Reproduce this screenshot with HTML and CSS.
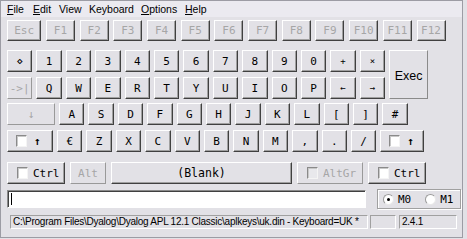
FILE: index.html
```html
<!DOCTYPE html>
<html>
<head>
<meta charset="utf-8">
<link rel="stylesheet" href="styles.css">
</head>
<body>
<div class="win">
  <div class="menubar">
    <span class="mi w-file"><u>F</u>ile</span>
    <span class="mi w-edit"><u>E</u>dit</span>
    <span class="mi w-view">View</span>
    <span class="mi w-kb">Keyboard</span>
    <span class="mi w-opt"><u>O</u>ptions</span>
    <span class="mi"><u>H</u>elp</span>
  </div>
  <div class="frow">
    <div class="key fk esc dim">Esc</div>
    <div class="key fk dim">F1</div>
    <div class="key fk dim">F2</div>
    <div class="key fk dim">F3</div>
    <div class="key fk dim">F4</div>
    <div class="key fk dim">F5</div>
    <div class="key fk dim">F6</div>
    <div class="key fk dim">F7</div>
    <div class="key fk dim">F8</div>
    <div class="key fk dim">F9</div>
    <div class="key fk dim">F10</div>
    <div class="key fk dim">F11</div>
    <div class="key fk dim">F12</div>
  </div>
  <div class="block12">
    <div class="rows">
      <div class="row">
        <div class="key">⋄</div>
        <div class="key">1</div>
        <div class="key">2</div>
        <div class="key">3</div>
        <div class="key">4</div>
        <div class="key">5</div>
        <div class="key">6</div>
        <div class="key">7</div>
        <div class="key">8</div>
        <div class="key">9</div>
        <div class="key">0</div>
        <div class="key small">+</div>
        <div class="key small">×</div>
      </div>
      <div class="row">
        <div class="key flat dim">-&gt;|</div>
        <div class="key">Q</div>
        <div class="key">W</div>
        <div class="key">E</div>
        <div class="key">R</div>
        <div class="key">T</div>
        <div class="key">Y</div>
        <div class="key">U</div>
        <div class="key">I</div>
        <div class="key">O</div>
        <div class="key">P</div>
        <div class="key small">←</div>
        <div class="key small">→</div>
      </div>
    </div>
    <div class="key exec">Exec</div>
  </div>
  <div class="row r3">
    <div class="key flat dim down">↓</div>
    <div class="key">A</div>
    <div class="key">S</div>
    <div class="key">D</div>
    <div class="key">F</div>
    <div class="key">G</div>
    <div class="key">H</div>
    <div class="key">J</div>
    <div class="key">K</div>
    <div class="key">L</div>
    <div class="key">[</div>
    <div class="key">]</div>
    <div class="key">#</div>
  </div>
  <div class="row r4">
    <div class="key left lshift"><span class="cb"></span><span class="arrow">↑</span></div>
    <div class="key">€</div>
    <div class="key">Z</div>
    <div class="key">X</div>
    <div class="key">C</div>
    <div class="key">V</div>
    <div class="key">B</div>
    <div class="key">N</div>
    <div class="key">M</div>
    <div class="key">,</div>
    <div class="key">.</div>
    <div class="key">/</div>
    <div class="key left rshift"><span class="cb"></span><span class="arrow">↑</span></div>
  </div>
  <div class="row r5">
    <div class="key left ctrl"><span class="cb"></span><span class="lbl">Ctrl</span></div>
    <div class="key flat dim alt">Alt</div>
    <div class="key blank">(Blank)</div>
    <div class="key flat dim left altgr"><span class="cb cbdim"></span><span class="lbl">AltGr</span></div>
    <div class="key left ctrl"><span class="cb"></span><span class="lbl">Ctrl</span></div>
  </div>
  <div class="inrow">
    <div class="input"><span class="caret"></span></div>
    <div class="group">
      <span class="radio on"></span><span class="rlbl">M0</span>
      <span class="radio"></span><span class="rlbl">M1</span>
    </div>
  </div>
  <div class="status">
    <div class="panel p1">C:\Program Files\Dyalog\Dyalog APL 12.1 Classic\aplkeys\uk.din - Keyboard=UK *</div>
    <div class="panel p2"></div>
    <div class="panel p3">2.4.1</div>
  </div>
</div>
</body>
</html>
```
FILE: styles.css
```css
html, body {
  margin: 0;
  padding: 0;
  background: #e2e1e6;
}
.win {
  box-sizing: border-box;
  width: 463px;
  height: 238px;
  border: 1px solid #9c9ca4;
  background: #e2e1e6;
  padding: 0 0 0 6px;
  font-family: "Liberation Sans", Arial, sans-serif;
}
.menubar {
  height: 16px;
  margin-left: -6px;
  padding-left: 6px;
  background: #ebeaf0;
  display: flex;
  align-items: center;
  font-size: 10.5px;
  color: #000;
}
.mi { display: inline-block; }
.mi u { text-decoration: underline; }
.w-file { width: 26px; }
.w-edit { width: 26px; }
.w-view { width: 30px; }
.w-kb { width: 52px; }
.w-opt { width: 44px; }

.key {
  box-sizing: border-box;
  width: 25.4px;
  height: 22px;
  flex: none;
  background: #e2e1e6;
  border: 1px solid;
  border-color: #ffffff #404040 #404040 #ffffff;
  box-shadow: inset -1px -1px #a0a0a0;
  display: flex;
  align-items: center;
  justify-content: center;
  font-family: "DejaVu Sans Mono", monospace;
  font-size: 11px;
  color: #000;
  white-space: nowrap;
}
.key.small { font-size: 9px; }
.key.dim { color: #a6a6a6; }
.key.flat {
  border-color: #ffffff #999999 #999999 #ffffff;
  box-shadow: none;
}
.frow {
  display: flex;
  gap: 4.7px;
  margin-top: 3px;
}
.fk { width: 29px; height: 21px; }
.fk.esc { width: 34.3px; }

.block12 {
  display: flex;
  gap: 4px;
  margin-top: 9px;
}
.rows {
  display: flex;
  flex-direction: column;
  gap: 5px;
}
.row {
  display: flex;
  gap: 4px;
}
.exec {
  width: 39px;
  height: 49px;
  font-family: "Liberation Sans", Arial, sans-serif;
  font-size: 12.5px;
  border-color: #ffffff #8a8a8a #8a8a8a #ffffff;
  box-shadow: none;
  padding-top: 2px;
}
.r3 { margin-top: 4px; }
.r3 .down { width: 48px; }
.r4 { margin-top: 5px; }
.key.left { justify-content: flex-start; }
.lshift { width: 46px; padding-left: 8px; }
.rshift { width: 44px; padding-left: 8px; }
.arrow { margin-left: 7px; font-size: 11px; font-weight: bold; }
.cb {
  box-sizing: border-box;
  width: 11px;
  height: 12px;
  background: #ffffff;
  border: 1px solid;
  border-color: #8a8a8a #f4f4f4 #f4f4f4 #8a8a8a;
  box-shadow: inset 1px 1px #c8c8c8;
  flex: none;
}
.cb.cbdim { background: #e8e8ec; }
.lbl { margin-left: 5px; }

.r5 { margin-top: 10px; gap: 5px; }
.ctrl { width: 58px; padding-left: 9px; }
.alt { width: 36px; }
.blank { width: 181px; font-size: 11.5px; }
.altgr { width: 66px; padding-left: 9px; }

.inrow {
  display: flex;
  align-items: center;
  gap: 11px;
  height: 20px;
  margin-top: 5px;
}
.input {
  box-sizing: border-box;
  width: 359px;
  height: 18px;
  background: #ffffff;
  border: 1px solid;
  border-color: #8a8a8a #ffffff #ffffff #8a8a8a;
  box-shadow: inset 1px 1px #404040;
  display: flex;
  align-items: center;
  padding-left: 3px;
}
.caret {
  width: 1px;
  height: 12px;
  background: #000;
}
.group {
  box-sizing: border-box;
  width: 84px;
  height: 20px;
  border: 1px solid #a0a0a0;
  box-shadow: inset 1px 1px #ffffff, 1px 1px #ffffff;
  display: flex;
  align-items: center;
  padding-left: 5px;
  font-family: "DejaVu Sans Mono", monospace;
  font-size: 11px;
}
.radio {
  box-sizing: border-box;
  width: 11px;
  height: 11px;
  border-radius: 50%;
  background: #ffffff;
  border: 1px solid #9a9a9a;
  border-right-color: #e8e8e8;
  border-bottom-color: #e8e8e8;
  position: relative;
  flex: none;
}
.radio.on::after {
  content: "";
  position: absolute;
  left: 3px;
  top: 3px;
  width: 3px;
  height: 3px;
  border-radius: 50%;
  background: #000;
}
.rlbl { margin-left: 4px; margin-right: 14px; }

.status {
  display: flex;
  height: 14px;
  margin-top: 6px;
  margin-left: 3px;
}
.panel {
  box-sizing: border-box;
  height: 14px;
  border: 1px solid;
  border-color: #a0a0a0 #ffffff #ffffff #a0a0a0;
  font-family: "Liberation Sans", Arial, sans-serif;
  font-size: 10px;
  letter-spacing: -0.25px;
  line-height: 12px;
  padding-left: 2px;
  white-space: nowrap;
  overflow: hidden;
}
.p1 { width: 358px; }
.p2 { width: 26px; margin-left: 2px; }
.p3 { width: 58px; margin-left: 3px; }
```
